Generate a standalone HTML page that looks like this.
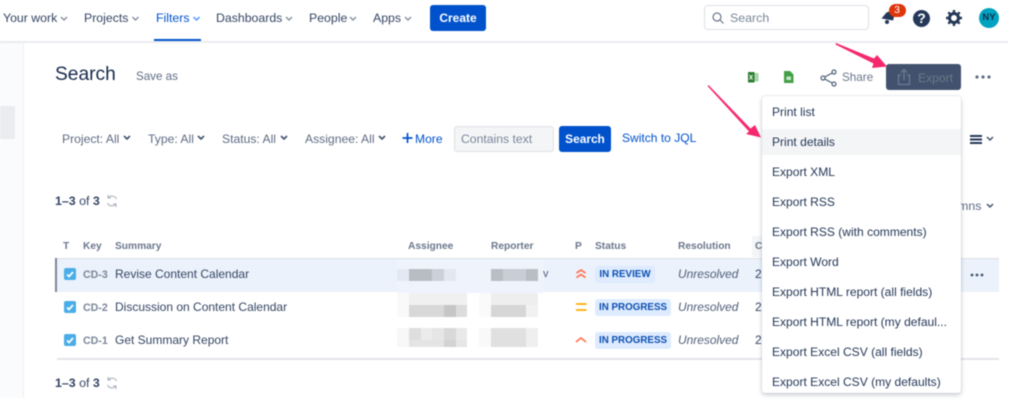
<!DOCTYPE html>
<html><head><meta charset="utf-8">
<style>
html,body{margin:0;padding:0;background:#fff;}
body{width:1024px;height:409px;overflow:hidden;position:relative;font-family:"Liberation Sans",sans-serif;color:#253858;font-size:12px;}
#p{position:absolute;left:0;top:0;width:1024px;height:409px;filter:blur(.45px);overflow:hidden;}
.t{position:absolute;white-space:nowrap;line-height:16px;}
.b{position:absolute;}
svg{position:absolute;overflow:visible;}
.nav{color:#344563;font-size:12.3px;top:10px;}
.fil{color:#5e6c84;font-size:12.15px;top:131px;}
.th{color:#6b778c;font-size:10.2px;font-weight:bold;top:239px;}
.key{color:#7a869a;font-size:10.6px;font-weight:bold;}
.sum{color:#344563;font-size:12px;}
.un{color:#505f79;font-size:11.95px;font-style:italic;left:678px;}
.lz{position:absolute;border-radius:3px;background:#deebff;color:#0b4fb0;font-size:9.8px;font-weight:bold;left:595px;height:17px;line-height:18px;text-align:center;}
.m{left:772px;color:#253858;font-size:12.05px;}
.cb{position:absolute;left:63.5px;width:12px;height:12px;border-radius:2px;background:#4bade8;}
</style></head><body><div id="p">
<!-- sidebar -->
<div class="b" style="left:0;top:42px;width:23px;height:356px;background:#fafbfc;border-right:1px solid #eff0f2;"></div>
<div class="b" style="left:0;top:106px;width:15px;height:33px;background:#ebecf0;border-radius:0 2px 2px 0;"></div>
<!-- top bar -->
<div class="b" style="left:0;top:0;width:1008px;height:41px;background:#fff;border-bottom:2px solid #ebecf0;"></div>
<div class="t nav" style="left:3px;">Your work</div>
<div class="t nav" style="left:84px;">Projects</div>
<div class="t nav" style="left:156px;color:#0052cc;">Filters</div>
<div class="t nav" style="left:216px;">Dashboards</div>
<div class="t nav" style="left:309px;">People</div>
<div class="t nav" style="left:373px;">Apps</div>
<svg width="1024" height="40" style="left:0;top:0" fill="none" stroke="#8993a4" stroke-width="1.5">
<path d="M61 17l3 3 3-3M132.500 17l3 3 3-3M350 17l3 3 3-3M405 17l3 3 3-3M286 17l3 3 3-3"/><path d="M193.500 17l3 3 3-3" stroke="#4c9aff"/></svg>
<div class="b" style="left:154px;top:39px;width:47px;height:2px;background:#0052cc;"></div>
<div class="b" style="left:430px;top:5px;width:56px;height:26px;background:#0052cc;border-radius:3px;color:#fff;font-weight:bold;font-size:12px;line-height:26px;text-align:center;">Create</div>
<!-- search -->
<div class="b" style="left:704px;top:5px;width:163px;height:23px;border:1.5px solid #dfe1e6;border-radius:4px;"></div>
<svg width="14" height="14" style="left:711px;top:11px" fill="none" stroke="#6b778c" stroke-width="1.2"><circle cx="6" cy="6" r="4"/><path d="M9 9l3.500 3.500"/></svg>
<div class="t" style="left:730px;top:10px;color:#7a869a;font-size:12.4px;">Search</div>
<!-- icons -->
<svg width="16" height="16" style="left:880px;top:9px" fill="#253858"><path d="M1.500 9.500L6.500 3.500l4-1.500 3.500 6-1 3.500z"/><circle cx="7" cy="13" r="2"/></svg>
<div class="b" style="left:888.500px;top:4px;width:17px;height:13px;border-radius:6.500px;background:#de350b;color:#fff;font-size:10.500px;line-height:13px;text-align:center;">3</div>
<div class="b" style="left:913px;top:10px;width:17px;height:17px;border-radius:50%;background:#253858;color:#fff;font-weight:bold;font-size:14px;line-height:17px;text-align:center;">?</div>
<svg width="16" height="16" style="left:946px;top:10px" fill="none" stroke="#253858"><circle cx="8" cy="8" r="4.500" stroke-width="3"/><path d="M8 0v3M8 13v3M0 8h3M13 8h3M2.300 2.300l2 2M11.700 11.700l2 2M13.700 2.300l-2 2M2.300 13.700l2-2" stroke-width="2.400"/></svg>
<div class="b" style="left:979px;top:8px;width:20px;height:20px;border-radius:50%;background:#00a3bf;color:#172b4d;font-weight:bold;font-size:9.5px;line-height:20px;text-align:center;">NY</div>
<!-- heading -->
<div class="t" style="left:55px;top:63px;font-size:19.2px;line-height:24px;color:#172b4d;">Search</div>
<div class="t" style="left:136px;top:69px;color:#5e6c84;font-size:11.6px;">Save as</div>
<!-- right tools -->
<svg width="11" height="11" style="left:748px;top:72px"><rect x="4" y="1" width="6.500" height="8.500" fill="#a5d6a7"/><rect x="0" y="0" width="6.500" height="10.500" fill="#2e7d32"/><path d="M1.500 3l3 4.500M4.500 3l-3 4.500" stroke="#fff" fill="none"/></svg>
<svg width="10" height="12" style="left:784px;top:71px"><path d="M0 0h6l3.500 3.500v8.500h-9.500z" fill="#43a047"/><rect x="2.500" y="5.500" width="4.500" height="3.500" fill="#c8e6c9"/></svg>
<svg width="17" height="17" style="left:820px;top:69px" fill="none" stroke="#505f79" stroke-width="1.200"><path d="M14 3l-11 6 11 6" /><circle cx="14" cy="3" r="2" fill="#fff"/><circle cx="3" cy="9" r="2" fill="#fff"/><circle cx="14" cy="15" r="2" fill="#fff"/></svg>
<div class="t" style="left:842px;top:70px;color:#6b778c;font-size:11.7px;">Share</div>
<div class="b" style="left:886px;top:64px;width:75px;height:26px;background:#42526e;border-radius:3px;"></div>
<svg width="16" height="18" style="left:897px;top:68px" fill="none" stroke="#6f7a8e" stroke-width="1.300"><path d="M4 7h-2.500v9.500h11v-9.500h-2.500M7 12v-10M4 4.500l3-3 3 3"/></svg>
<div class="t" style="left:918px;top:70px;color:#6d7789;font-size:12.1px;">Export</div>
<svg width="18" height="4" style="left:975px;top:75px" fill="#5e6c84"><circle cx="2" cy="2" r="1.600"/><circle cx="8" cy="2" r="1.600"/><circle cx="14" cy="2" r="1.600"/></svg>
<!-- filter row -->
<div class="t fil" style="left:62px;">Project: All</div>
<div class="t fil" style="left:148px;">Type: All</div>
<div class="t fil" style="left:222px;">Status: All</div>
<div class="t fil" style="left:305px;">Assignee: All</div>
<svg width="400" height="10" style="left:0;top:134px" fill="none" stroke="#42526e" stroke-width="1.600"><path d="M124 2l3 3 3-3M198 2l3 3 3-3M281 2l3 3 3-3M379 2l3 3 3-3"/></svg>
<svg width="12" height="12" style="left:402px;top:133px" fill="none" stroke="#0052cc" stroke-width="1.700"><path d="M5.500 0v10M.5 5h10"/></svg>
<div class="t" style="left:415px;top:131px;color:#0052cc;font-size:12.1px;">More</div>
<div class="b" style="left:454px;top:126px;width:98px;height:24px;background:#f4f5f7;border:1px solid #dfe1e6;border-radius:3px;"></div>
<div class="t" style="left:461px;top:131px;color:#7a869a;font-size:12.2px;">Contains text</div>
<div class="b" style="left:559px;top:126px;width:52px;height:26px;background:#0052cc;border-radius:3px;color:#fff;font-weight:bold;font-size:11.9px;line-height:26px;text-align:center;">Search</div>
<div class="t" style="left:622px;top:130px;color:#0052cc;font-size:12.05px;">Switch to JQL</div>
<div class="b" style="left:970px;top:135px;width:12px;height:2px;background:#253858;box-shadow:0 3.500px 0 #253858,0 7px 0 #253858;"></div>
<svg width="10" height="8" style="left:986px;top:136px" fill="none" stroke="#42526e" stroke-width="1.500"><path d="M1 1l3 3 3-3"/></svg>
<!-- count -->
<div class="t" style="left:55px;top:193px;font-size:12.4px;color:#344563;"><b>1–3</b> of <b>3</b></div>
<svg width="12" height="12" style="left:106px;top:195px" fill="none" stroke="#a5adba" stroke-width="1"><path d="M10.500 4a5 5 0 0 0-8.500-1M1.500 8a5 5 0 0 0 8.500 1M2 0v3h3M10 12v-3h-3"/></svg>
<div class="t" style="left:958px;top:198px;color:#5e6c84;font-size:12.400px;">mns</div>
<svg width="10" height="8" style="left:986px;top:203px" fill="none" stroke="#42526e" stroke-width="1.500"><path d="M1 1l3 3 3-3"/></svg>
<!-- table head -->
<div class="t th" style="left:63px;">T</div>
<div class="t th" style="left:83px;">Key</div>
<div class="t th" style="left:115px;">Summary</div>
<div class="t th" style="left:408px;">Assignee</div>
<div class="t th" style="left:491px;">Reporter</div>
<div class="t th" style="left:575px;">P</div>
<div class="t th" style="left:595px;">Status</div>
<div class="t th" style="left:678px;">Resolution</div>
<div class="b" style="left:752px;top:236px;width:12px;height:21px;background:#f4f5f7;"></div>
<div class="t th" style="left:755px;">C</div>
<!-- rows -->
<div class="b" style="left:56px;top:258px;width:943px;height:34px;background:#ebf2fb;border-top:1px solid #dfe1e6;box-sizing:border-box;"></div>
<div class="b" style="left:55px;top:258px;width:2px;height:34px;background:#7a869a;"></div>
<div class="b" style="left:57px;top:358px;width:942px;height:2px;background:#e4e5ea;"></div>
<div class="cb" style="top:268px;"></div><div class="cb" style="top:301px;"></div><div class="cb" style="top:334px;"></div>
<svg width="12" height="90" style="left:63.5px;top:268px" fill="none" stroke="#fff" stroke-width="1.700"><path d="M3 6.500l2 2 4-4.500M3 39.500l2 2 4-4.500M3 72.500l2 2 4-4.500"/></svg>
<div class="t key" style="left:83px;top:266.500px;">CD-3</div>
<div class="t key" style="left:83px;top:299.500px;">CD-2</div>
<div class="t key" style="left:83px;top:332.500px;">CD-1</div>
<div class="t sum" style="left:115px;top:266px;">Revise Content Calendar</div>
<div class="t sum" style="left:115px;top:299px;">Discussion on Content Calendar</div>
<div class="t sum" style="left:115px;top:332px;">Get Summary Report</div>
<!-- blurred names row 1 -->
<div class="b" style="left:397px;top:260px;width:147px;height:33px;background:#eff4fc;border-radius:2px;"></div>
<div class="b" style="left:397px;top:269px;width:12px;height:12px;background:#e3e9f2;"></div>
<div class="b" style="left:409px;top:269px;width:23px;height:12px;background:#b8bdc4;"></div>
<div class="b" style="left:432px;top:269px;width:12px;height:12px;background:#ccd1d9;"></div>
<div class="b" style="left:444px;top:269px;width:12px;height:12px;background:#e3e7ef;"></div>
<div class="b" style="left:491px;top:269px;width:12px;height:12px;background:#b9bec4;"></div>
<div class="b" style="left:503px;top:269px;width:23px;height:12px;background:#c9ced6;"></div>
<div class="b" style="left:526px;top:269px;width:12px;height:12px;background:#b9bec4;"></div>
<div class="t" style="left:543px;top:266px;color:#505f79;font-size:11px;">v</div>
<!-- row 2 -->
<div class="b" style="left:397px;top:293px;width:12px;height:24px;background:#f9f9f9;"></div>
<div class="b" style="left:409px;top:293px;width:58px;height:12px;background:#f0f0f1;"></div>
<div class="b" style="left:409px;top:305px;width:35px;height:12px;background:#d8d8d9;"></div>
<div class="b" style="left:444px;top:305px;width:12px;height:12px;background:#c6c6c7;"></div>
<div class="b" style="left:456px;top:305px;width:11px;height:12px;background:#dcdcdd;"></div>
<div class="b" style="left:479px;top:293px;width:12px;height:24px;background:#fafafa;"></div>
<div class="b" style="left:491px;top:293px;width:47px;height:12px;background:#eeeeef;"></div>
<div class="b" style="left:491px;top:305px;width:35px;height:12px;background:#d6d6d7;"></div>
<div class="b" style="left:526px;top:305px;width:12px;height:12px;background:#f1f1f2;"></div>
<!-- row 3 -->
<div class="b" style="left:397px;top:328px;width:12px;height:19px;background:#f8f8f8;"></div>
<div class="b" style="left:409px;top:328px;width:12px;height:12px;background:#dedede;"></div>
<div class="b" style="left:421px;top:328px;width:11px;height:12px;background:#ebebeb;"></div>
<div class="b" style="left:432px;top:328px;width:12px;height:12px;background:#e6e6e6;"></div>
<div class="b" style="left:444px;top:328px;width:12px;height:12px;background:#d9d9d9;"></div>
<div class="b" style="left:456px;top:328px;width:11px;height:12px;background:#e9e9e9;"></div>
<div class="b" style="left:409px;top:340px;width:35px;height:7px;background:#e4e4e4;"></div>
<div class="b" style="left:444px;top:340px;width:12px;height:7px;background:#d3d3d3;"></div>
<div class="b" style="left:456px;top:340px;width:11px;height:7px;background:#e6e6e6;"></div>
<div class="b" style="left:479px;top:328px;width:12px;height:19px;background:#f9f9f9;"></div>
<div class="b" style="left:491px;top:328px;width:35px;height:19px;background:#e0e0e0;"></div>
<div class="b" style="left:526px;top:328px;width:12px;height:19px;background:#efefef;"></div>
<!-- priority -->
<svg width="14" height="90" style="left:575px;top:268px" fill="none" stroke-width="1.700">
<path d="M1.500 5l4.500-3 4.500 3M1.500 9.500l4.500-3 4.500 3" stroke="#ff7452"/>
<path d="M1 36h10.500M1 42h10.500" stroke="#ffab00"/>
<path d="M1 74l5-4 5 4" stroke="#ff7452"/></svg>
<div class="lz" style="top:266px;width:60px;">IN REVIEW</div>
<div class="lz" style="top:299px;width:76px;">IN PROGRESS</div>
<div class="lz" style="top:332px;width:76px;">IN PROGRESS</div>
<div class="t un" style="top:265.500px;">Unresolved</div>
<div class="t un" style="top:298.500px;">Unresolved</div>
<div class="t un" style="top:331.500px;">Unresolved</div>
<div class="t sum" style="left:755px;top:266px;">2</div>
<div class="t sum" style="left:755px;top:299px;">2</div>
<div class="t sum" style="left:755px;top:332px;">2</div>
<svg width="16" height="4" style="left:970px;top:273px" fill="#42526e"><circle cx="2" cy="2" r="1.400"/><circle cx="7" cy="2" r="1.400"/><circle cx="12" cy="2" r="1.400"/></svg>
<div class="t" style="left:55px;top:375px;font-size:12.4px;color:#344563;"><b>1–3</b> of <b>3</b></div>
<svg width="12" height="12" style="left:106px;top:377px" fill="none" stroke="#a5adba" stroke-width="1"><path d="M10.500 4a5 5 0 0 0-8.500-1M1.500 8a5 5 0 0 0 8.500 1M2 0v3h3M10 12v-3h-3"/></svg>
<!-- dropdown -->
<div class="b" style="left:762px;top:96px;width:199px;height:297px;background:#fff;border-radius:3px;box-shadow:0 2px 5px rgba(9,30,66,.22),0 0 1px rgba(9,30,66,.3);"></div>
<div class="b" style="left:762px;top:129px;width:199px;height:26px;background:#f4f5f7;"></div>
<div class="t m" style="top:104px;">Print list</div>
<div class="t m" style="top:134px;">Print details</div>
<div class="t m" style="top:164px;">Export XML</div>
<div class="t m" style="top:194px;">Export RSS</div>
<div class="t m" style="top:224px;">Export RSS (with comments)</div>
<div class="t m" style="top:254px;">Export Word</div>
<div class="t m" style="top:284px;">Export HTML report (all fields)</div>
<div class="t m" style="top:314px;">Export HTML report (my defaul...</div>
<div class="t m" style="top:344px;">Export Excel CSV (all fields)</div>
<div class="t m" style="top:374px;">Export Excel CSV (my defaults)</div>
<!-- arrows -->
<svg width="1024" height="409" style="left:0;top:0" fill="#f5286e">
<path d="M836 43L874 58.500L877 55L887 66.500L872 68L873.500 63.500L835.500 44.500Z"/>
<path d="M708.500 85L750.500 128.500L755 125L761 137.500L746 134L749 131.500L707.500 86Z"/>
</svg>
</div></body></html>
